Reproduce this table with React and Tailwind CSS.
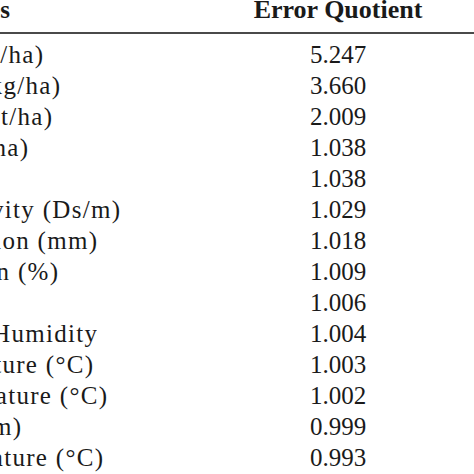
import React from "react";

const rows = [
  { label: "Grain Yield (t/ha)", clip: "w-[43px]", value: "5.247" },
  { label: "Biomass (kg/ha)", clip: "w-[60px]", value: "3.660" },
  { label: "Straw Yield (t/ha)", clip: "w-[52px]", value: "2.009" },
  { label: "Harvest (kg/ha)", clip: "w-[28px]", value: "1.038" },
  { label: "Harvest Index", clip: "w-0", value: "1.038" },
  { label: "Electrical Conductivity (Ds/m)", clip: "w-[120px]", value: "1.029" },
  { label: "Irrigation (mm)", clip: "w-[97px]", value: "1.018" },
  { label: "Soil Moisture Retention (%)", clip: "w-[58px]", value: "1.009" },
  { label: "Soil pH", clip: "w-0", value: "1.006" },
  { label: "Relative Humidity", clip: "w-[97px]", value: "1.004" },
  { label: "Mean Temperature (°C)", clip: "w-[93px]", value: "1.003" },
  { label: "Maximum Temperature (°C)", clip: "w-[107px]", value: "1.002" },
  { label: "Rainfall (mm)", clip: "w-[21px]", value: "0.999" },
  { label: "Minimum Temperature (°C)", clip: "w-[103px]", value: "0.993" },
];

const App = () => {
  return (
    <div className="w-[474px] h-[474px] overflow-hidden bg-white text-[#1a1a1a] text-[25px] font-['Liberation_Serif','Times_New_Roman',serif]">
      {/* header */}
      <div className="grid grid-cols-[250px_176px] h-[34px] border-b-2 border-[#4a4a4a] font-bold leading-[20px]">
        <div className="flex justify-end overflow-hidden w-[10px]">
          <span className="whitespace-nowrap">Variables</span>
        </div>
        <div className="text-center whitespace-nowrap text-[26px]">Error Quotient</div>
      </div>

      {/* body */}
      <div className="pt-[5px]">
        {rows.map((row) => (
          <div key={row.label} className="grid grid-cols-[250px_176px] h-[31px] leading-[31px]">
            <div className={`flex justify-end overflow-hidden ${row.clip}`}>
              <span className="whitespace-nowrap tracking-[1.3px] -mr-[1.3px]">{row.label}</span>
            </div>
            <div className="text-center">{row.value}</div>
          </div>
        ))}
      </div>
    </div>
  );
};

export default App;
